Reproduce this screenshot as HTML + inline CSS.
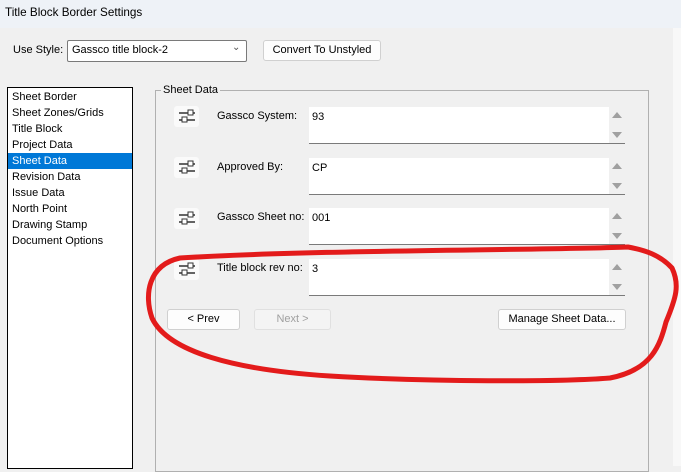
<html><head><style>
body{margin:0;width:681px;height:466px;background:#f0f0f0;font-family:"Liberation Sans",sans-serif;font-size:11px;color:#000;position:relative;overflow:hidden}
.a{position:absolute}
.btn{position:absolute;background:#fdfdfd;border:1px solid #d0d0d0;border-radius:3px;text-align:center;line-height:18px}
.tb{position:absolute;left:309px;width:316px;height:36px;background:#fff;border-bottom:1px solid #7a7a7a}
.sc{position:absolute;right:0;top:0;width:16px;height:36px;background:#f0f0f0}
.ic{position:absolute;left:174px;width:25px;height:21px;background:#fafafa;border-radius:3px}
.lb{position:absolute;left:217px}
.li{height:16px;line-height:16px;padding-left:4px}
</style></head><body>
<div class="a" style="left:0;top:0;width:681px;height:28px;background:#eef2f7"></div>
<div class="a" style="left:5px;top:6px;font-size:11.7px">Title Block Border Settings</div>
<div class="a" style="left:673px;top:28px;width:8px;height:438px;background:#f8f8f8"></div>
<div class="a" style="left:13px;top:44px">Use Style:</div>
<div class="a" style="left:67px;top:40px;width:178px;height:20px;background:#fff;border:1px solid #7a7a7a;border-radius:2px"><span class="a" style="left:4px;top:3px">Gassco title block-2</span><span class="a" style="left:164px;top:1px;font-size:10px;color:#555">&#8964;</span></div>
<div class="btn" style="left:263px;top:40px;width:116px;height:19px">Convert To Unstyled</div>
<div class="a" style="left:7px;top:87px;width:124px;height:380px;background:#fff;border:1px solid #000">
<div style="height:1px"></div>
<div class="li">Sheet Border</div><div class="li">Sheet Zones/Grids</div><div class="li">Title Block</div><div class="li">Project Data</div><div class="li" style="background:#0078d7;color:#fff">Sheet Data</div><div class="li">Revision Data</div><div class="li">Issue Data</div><div class="li">North Point</div><div class="li">Drawing Stamp</div><div class="li">Document Options</div></div>
<div class="a" style="left:155px;top:90px;width:492px;height:380px;border:1px solid #b0b0b0"></div>
<div class="a" style="left:161px;top:84px;background:#f0f0f0;padding:0 2px">Sheet Data</div>
<svg width="0" height="0" style="position:absolute"><defs><g id="s"><path d="M5 7h16M5 14h16" stroke="#333" stroke-width="1.5"/><rect x="14" y="4" width="5" height="5" fill="#fff" stroke="#333"/><rect x="8" y="11" width="5" height="5" fill="#fff" stroke="#333"/></g><g id="ar"><path d="M3 11L8 5L13 11Z M3 25L8 31L13 25Z" fill="#a0a0a0"/></g></defs></svg>
<div class="ic" style="top:106px"><svg width="25" height="21"><use href="#s"/></svg></div>
<div class="ic" style="top:157px"><svg width="25" height="21"><use href="#s"/></svg></div>
<div class="ic" style="top:208px"><svg width="25" height="21"><use href="#s"/></svg></div>
<div class="ic" style="top:259px"><svg width="25" height="21"><use href="#s"/></svg></div>
<div class="lb" style="top:110px">Gassco System:</div>
<div class="lb" style="top:161px">Approved By:</div>
<div class="lb" style="top:211px">Gassco Sheet no:</div>
<div class="lb" style="top:262px">Title block rev no:</div>
<div class="tb" style="top:107px"><span class="a" style="left:3px;top:4px">93</span><svg class="sc" width="16" height="36"><use href="#ar"/></svg></div>
<div class="tb" style="top:158px"><span class="a" style="left:3px;top:4px">CP</span><svg class="sc" width="16" height="36"><use href="#ar"/></svg></div>
<div class="tb" style="top:208px"><span class="a" style="left:3px;top:4px">001</span><svg class="sc" width="16" height="36"><use href="#ar"/></svg></div>
<div class="tb" style="top:259px"><span class="a" style="left:3px;top:4px">3</span><svg class="sc" width="16" height="36"><use href="#ar"/></svg></div>
<div class="btn" style="left:167px;top:309px;width:71px;height:19px">&lt; Prev</div>
<div class="btn" style="left:254px;top:309px;width:75px;height:19px;background:#f4f4f4;border-color:#e0e0e0;color:#a0a0a0">Next &gt;</div>
<div class="btn" style="left:498px;top:309px;width:126px;height:19px">Manage Sheet Data...</div>
<svg class="a" style="left:0;top:0" width="681" height="466"><path d="M628 247 C560 250 300 250 180 258 C148 265 144 295 152 318 C168 352 235 370 330 376 C430 382 560 382 610 378 C652 370 660 345 666 322 C676 298 680 285 672 268 C660 255 645 250 628 247 Z" fill="none" stroke="#e31b1b" stroke-width="5"/></svg>
</body></html>
